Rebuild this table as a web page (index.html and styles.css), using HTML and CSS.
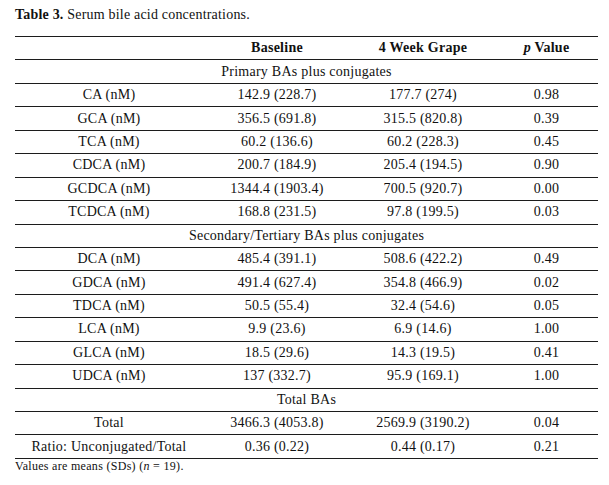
FILE: index.html
```html
<!DOCTYPE html>
<html lang="en">
<head>
<meta charset="utf-8">
<title>Table 3</title>
<link rel="stylesheet" href="styles.css">
</head>
<body>
<div class="page">
  <p class="caption"><b>Table 3.</b> Serum bile acid concentrations.</p>
  <div class="table">
    <div class="row head"><span></span><span>Baseline</span><span>4 Week Grape</span><span><i>p</i> Value</span></div>
    <div class="row span"><span>Primary BAs plus conjugates</span></div>
    <div class="row"><span>CA (nM)</span><span>142.9 (228.7)</span><span>177.7 (274)</span><span>0.98</span></div>
    <div class="row"><span>GCA (nM)</span><span>356.5 (691.8)</span><span>315.5 (820.8)</span><span>0.39</span></div>
    <div class="row"><span>TCA (nM)</span><span>60.2 (136.6)</span><span>60.2 (228.3)</span><span>0.45</span></div>
    <div class="row"><span>CDCA (nM)</span><span>200.7 (184.9)</span><span>205.4 (194.5)</span><span>0.90</span></div>
    <div class="row"><span>GCDCA (nM)</span><span>1344.4 (1903.4)</span><span>700.5 (920.7)</span><span>0.00</span></div>
    <div class="row"><span>TCDCA (nM)</span><span>168.8 (231.5)</span><span>97.8 (199.5)</span><span>0.03</span></div>
    <div class="row span"><span>Secondary/Tertiary BAs plus conjugates</span></div>
    <div class="row"><span>DCA (nM)</span><span>485.4 (391.1)</span><span>508.6 (422.2)</span><span>0.49</span></div>
    <div class="row"><span>GDCA (nM)</span><span>491.4 (627.4)</span><span>354.8 (466.9)</span><span>0.02</span></div>
    <div class="row"><span>TDCA (nM)</span><span>50.5 (55.4)</span><span>32.4 (54.6)</span><span>0.05</span></div>
    <div class="row"><span>LCA (nM)</span><span>9.9 (23.6)</span><span>6.9 (14.6)</span><span>1.00</span></div>
    <div class="row"><span>GLCA (nM)</span><span>18.5 (29.6)</span><span>14.3 (19.5)</span><span>0.41</span></div>
    <div class="row"><span>UDCA (nM)</span><span>137 (332.7)</span><span>95.9 (169.1)</span><span>1.00</span></div>
    <div class="row span"><span>Total BAs</span></div>
    <div class="row"><span>Total</span><span>3466.3 (4053.8)</span><span>2569.9 (3190.2)</span><span>0.04</span></div>
    <div class="row"><span>Ratio: Unconjugated/Total</span><span>0.36 (0.22)</span><span>0.44 (0.17)</span><span>0.21</span></div>
  </div>
  <p class="note">Values are means (SDs) (<i>n</i> = 19).</p>
</div>
</body>
</html>
```

FILE: styles.css
```css
html, body {
  margin: 0;
  padding: 0;
  background: #ffffff;
}

.page {
  padding: 6px 0 0 15px;
  font-family: "Liberation Serif", "Times New Roman", serif;
  color: #111;
}

.caption {
  margin: 0 0 12px 0;
  font-size: 14px;
  line-height: 18px;
  letter-spacing: 0.2px;
}

.table {
  width: 583px;
  border-top: 1px solid #1c1c1c;
  font-size: 14px;
  letter-spacing: 0.25px;
}

.row {
  display: grid;
  grid-template-columns: 188px 148px 144px 103px;
  height: 23.44px;
  box-sizing: border-box;
  border-bottom: 1px solid #1c1c1c;
  align-items: center;
  text-align: center;
  white-space: nowrap;
}

.head {
  font-weight: bold;
}

.span {
  grid-template-columns: 1fr;
}

.note {
  margin: 0;
  font-size: 12px;
  line-height: 14px;
  letter-spacing: 0.3px;
}
```
